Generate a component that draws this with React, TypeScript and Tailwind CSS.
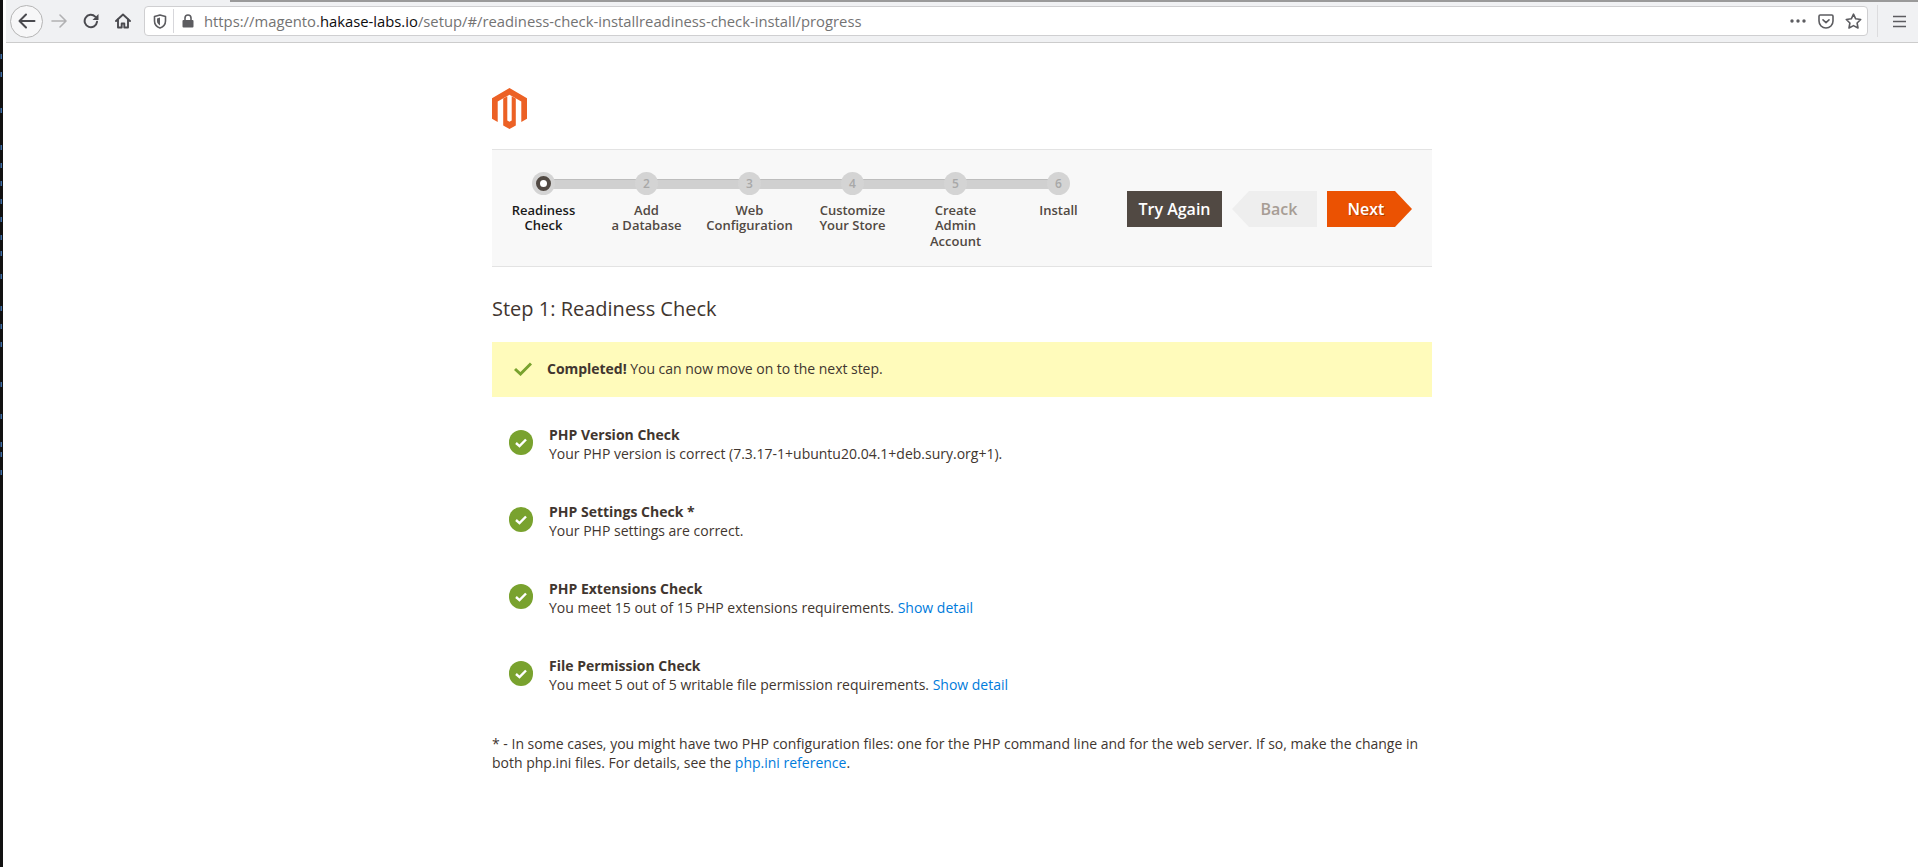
const steps = [
  { n: "", label: ["Readiness", "Check"] },
  { n: "2", label: ["Add", "a Database"] },
  { n: "3", label: ["Web", "Configuration"] },
  { n: "4", label: ["Customize", "Your Store"] },
  { n: "5", label: ["Create", "Admin", "Account"] },
  { n: "6", label: ["Install"] },
]

const checks = [
  { title: "PHP Version Check", text: "Your PHP version is correct (7.3.17-1+ubuntu20.04.1+deb.sury.org+1)." },
  { title: "PHP Settings Check *", text: "Your PHP settings are correct." },
  { title: "PHP Extensions Check", text: "You meet 15 out of 15 PHP extensions requirements. ", link: "Show detail" },
  { title: "File Permission Check", text: "You meet 5 out of 5 writable file permission requirements. ", link: "Show detail" },
]

const stripMarks = [54, 72, 108, 145, 163, 181, 199, 217, 235, 251, 274, 306, 324, 342, 382, 414, 442, 452, 470]

function Toolbar() {
  return (
    <header className="ml-[6px] flex h-[43px] shrink-0 items-center border-b border-[#cccccc] bg-[#f0f1f3] font-['Open_Sans',sans-serif] relative">
      <div className="absolute left-[224px] right-0 top-0 h-[2px] bg-[#9a9a9a]" />
      <div className="ml-[4px] flex h-[33px] w-[33px] items-center justify-center rounded-full border border-[#b5b5b5] bg-[#f7f7f8]">
        <svg width="18" height="16" viewBox="0 0 18 16" fill="none" stroke="#4a4a4f" strokeWidth="2" strokeLinecap="round" strokeLinejoin="round">
          <path d="M16.5 8H2M8 1.5 1.5 8 8 14.5" />
        </svg>
      </div>
      <svg className="ml-[8px]" width="16" height="14" viewBox="0 0 16 14" fill="none" stroke="#b1b1b3" strokeWidth="1.6" strokeLinecap="round" strokeLinejoin="round">
        <path d="M1 7h13.5M9 1l6 6-6 6" />
      </svg>
      <svg className="ml-[16px]" width="16" height="16" viewBox="0 0 16 16" fill="none">
        <path d="M14 8.800A6.200 6.200 0 1 1 12.200 3.600" stroke="#4a4a4f" strokeWidth="2" strokeLinecap="round" />
        <path d="M15.500 1V7H9.500Z" fill="#4a4a4f" />
      </svg>
      <svg className="ml-[16px]" width="16" height="16" viewBox="0 0 16 16" fill="none" stroke="#4a4a4f" strokeWidth="1.9" strokeLinecap="round" strokeLinejoin="round">
        <path d="M1 8 8 1.500 15 8" />
        <path d="M3 6.500V14.500H6.700V10.500H9.300V14.500H13V6.500" />
      </svg>
      <div className="ml-[13px] flex h-[30px] w-[1724px] items-center rounded-[4px] border border-[#cfcfd1] bg-white">
        <svg className="ml-[8px]" width="14" height="15" viewBox="0 0 14 15" fill="none">
          <path d="M7 1 1.500 2.600V7c0 3.400 2.300 5.800 5.500 7 3.200-1.200 5.500-3.600 5.500-7V2.600z" stroke="#5c5c60" strokeWidth="1.6" strokeLinejoin="round" />
          <path d="M7 3.600 4 4.600V7c0 2 1.200 3.500 3 4.400z" fill="#5c5c60" />
        </svg>
        <div className="ml-[6px] h-[24px] w-px bg-[#d7d7db]" />
        <svg className="ml-[8px]" width="12" height="14" viewBox="0 0 12 14">
          <path d="M3 6V4a3 3 0 0 1 6 0v2" fill="none" stroke="#5c5c60" strokeWidth="1.6" />
          <rect x="0.5" y="6" width="11" height="7.5" rx="1" fill="#5c5c60" />
        </svg>
        <span className="ml-[10px] whitespace-nowrap text-[14.8px] text-[#737373]">
          https://magento.<span className="text-[#0c0c0d]">hakase-labs.io</span>/setup/#/readiness-check-installreadiness-check-install/progress
        </span>
        <div className="ml-auto flex items-center">
          <svg width="16" height="4" viewBox="0 0 16 4" fill="#5c5c60">
            <circle cx="2" cy="2" r="1.7" />
            <circle cx="8" cy="2" r="1.7" />
            <circle cx="14" cy="2" r="1.7" />
          </svg>
          <svg className="ml-[12px]" width="16" height="15" viewBox="0 0 16 15" fill="none" stroke="#5c5c60" strokeWidth="1.6" strokeLinecap="round" strokeLinejoin="round">
            <path d="M1 2.200C1 1.500 1.500 1 2.200 1h11.600c.7 0 1.200.5 1.200 1.200V7a7 7 0 0 1-14 0z" />
            <path d="M5 5.800 8 8.600l3-2.800" />
          </svg>
          <svg className="ml-[11px] mr-[5px]" width="17" height="16" viewBox="0 0 17 16" fill="none" stroke="#5c5c60" strokeWidth="1.6" strokeLinejoin="round">
            <path d="M8.500 1.200 10.700 5.800l5 .7-3.600 3.500.9 5-4.500-2.400L4 15l.9-5L1.300 6.500l5-.7z" />
          </svg>
        </div>
      </div>
      <div className="ml-[9px] h-[32px] w-px bg-[#dcdcde]" />
      <svg className="ml-[15px]" width="13" height="13" viewBox="0 0 13 13" fill="none" stroke="#5c5c60" strokeWidth="1.6">
        <path d="M0 1.500h13M0 6.500h13M0 11.500h13" />
      </svg>
    </header>
  )
}

function Stepper() {
  return (
    <ol className="relative flex w-[618px] pt-[22px]">
      <div className="absolute left-[51px] top-[29px] h-[10px] w-[515px] border-t border-[#bdbdbd] bg-[#d0d0d0]" />
      {steps.map((s, i) => (
        <li key={i} className="relative flex w-[103px] flex-col items-center text-center">
          <div className="flex h-[23px] w-[23px] items-center justify-center rounded-full bg-[#d4d4d4] text-[12px] font-semibold leading-none text-[#a8a8a8]">
            {i === 0 ? <div className="h-[15px] w-[15px] rounded-full border-[4.5px] border-[#514943] bg-white" /> : s.n}
          </div>
          <div className={`mt-[8px] text-[13px] font-semibold leading-[15.4px] ${i === 0 ? "text-[#1a1a1a]" : "text-[#514943]"}`}>
            {s.label.map((l) => (
              <div key={l}>{l}</div>
            ))}
          </div>
        </li>
      ))}
    </ol>
  )
}

function CheckRow({ title, text, link }: { title: string; text: string; link?: string }) {
  return (
    <div className="flex h-[38px] items-center">
      <div className="ml-[17px] mt-[-3px] flex h-[25px] w-[24px] shrink-0 items-center justify-center rounded-full bg-[#79a22e]">
        <svg width="12" height="10" viewBox="0 0 12 10" fill="none" stroke="white" strokeWidth="2.4">
          <path d="M1 5l3.500 3.200L11 1.500" />
        </svg>
      </div>
      <div className="ml-[16px] text-[14px] leading-[19px]">
        <div className="font-bold">{title}</div>
        <div>
          {text}
          {link && <a className="text-[#007bdb]">{link}</a>}
        </div>
      </div>
    </div>
  )
}

export default function App() {
  return (
    <div className="relative h-[867px] overflow-hidden bg-white font-['Open_Sans',sans-serif] text-[#41362f]">
      <svg className="absolute left-0 top-0" width="3" height="867">
        <rect width="3" height="867" fill="#111111" />
        {stripMarks.map((y) => (
          <rect key={y} x="0.5" y={y} width="1.500" height="5" fill="#3f6fa8" />
        ))}
      </svg>
      <Toolbar />
      <main className="ml-[492px] w-[940px]">
        <svg className="mt-[45px] block" width="35" height="41" viewBox="0 0 35 41" fill="#ec6125">
          <path d="M17.500 0 35 10.200V30.700L29.300 34V13.500L17.500 6.700 5.700 13.500V34L0 30.700V10.200Z" />
          <path d="M17.500 41 11.200 37.500V10.600L15.300 8.300V32.500L17.500 33.800 19.700 32.500V8.300L23.800 10.600V37.500Z" />
        </svg>
        <section className="mt-[20px] flex h-[118px] border-y border-[#e3e3e3] bg-[#f8f8f8]">
          <Stepper />
          <div className="ml-[17px] mt-[41px] flex h-[36px] text-[16px] font-semibold leading-[36px]">
            <button className="w-[95px] bg-[#514943] text-white">Try Again</button>
            <button className="ml-[10px] w-[85px] bg-[#eeeeee] pl-[9px] text-center text-[#a79d95] [clip-path:polygon(20%_0,100%_0,100%_100%,20%_100%,0_50%)]">
              Back
            </button>
            <button className="ml-[10px] w-[85px] bg-[#eb5202] pr-[7px] text-center text-white [clip-path:polygon(0_0,80%_0,100%_50%,80%_100%,0_100%)] [text-shadow:1px_1px_0_rgba(0,0,0,0.25)]">
              Next
            </button>
          </div>
        </section>
        <h1 className="mt-[28px] text-[20px] leading-[28px]">Step 1: Readiness Check</h1>
        <div className="mt-[19px] flex h-[55px] items-center bg-[#fffbbb] pb-[2px] text-[14px]">
          <svg className="ml-[22px]" width="18" height="14" viewBox="0 0 18 14" fill="none" stroke="#79a22e" strokeWidth="3">
            <path d="M1 7l5.500 5L17 1.500" />
          </svg>
          <p className="ml-[15px] tracking-[-0.03px]">
            <b>Completed!</b> You can now move on to the next step.
          </p>
        </div>
        <div className="mt-[28px] flex flex-col gap-[39px]">
          {checks.map((c) => (
            <CheckRow key={c.title} {...c} />
          ))}
        </div>
        <p className="mt-[40px] text-[14px] leading-[19px]">
          * - In some cases, you might have two PHP configuration files: one for the PHP command line and for the web server. If so, make the change in both php.ini files. For details, see the <a className="text-[#007bdb]">php.ini reference</a>.
        </p>
      </main>
    </div>
  )
}
